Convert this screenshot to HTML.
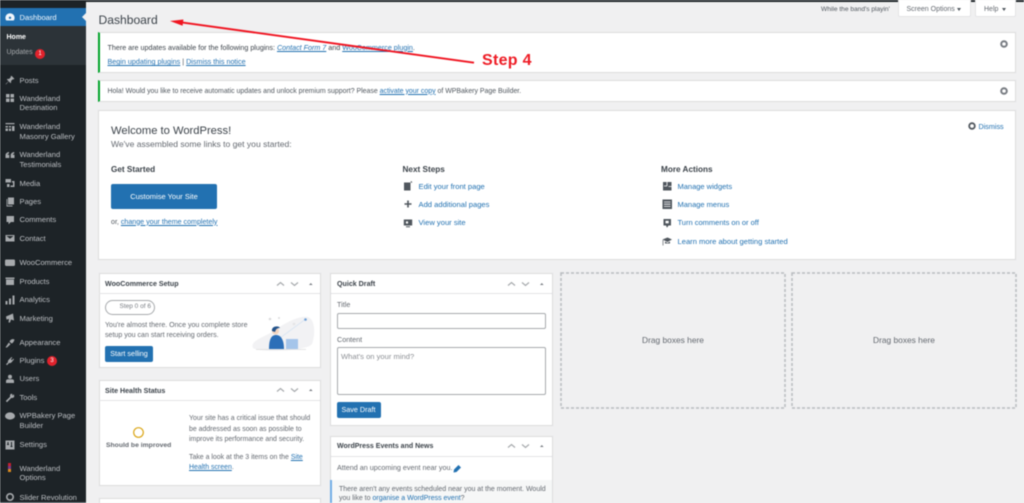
<!DOCTYPE html>
<html><head><meta charset="utf-8"><title>Dashboard</title>
<style>
html,body{margin:0;padding:0;width:1024px;height:503px;overflow:hidden;background:#f0f0f1}
body{position:relative;font-family:"Liberation Sans",sans-serif;font-size:7.6px;color:#50575e}
#w{position:absolute;left:0;top:0;width:1024px;height:503px;overflow:hidden;filter:blur(.42px)}
#w div,#w a,#w svg{position:absolute}
.t{white-space:nowrap;line-height:10px}
a.t{color:#2271b1;text-decoration:none}
.u{text-decoration:underline!important}
.m{left:19.5px;color:#bcbfc3;white-space:nowrap;line-height:9.5px;font-size:7.6px}
.i{left:5px;width:10px;height:10px}
.b{background:#fff;border:1px solid #dcdcde;box-sizing:border-box}
.h{font-weight:bold;font-size:7.1px;color:#3c434a;white-space:nowrap;line-height:10px}
.hl{height:1px;background:#e4e4e6}
.btn{background:#2271b1;border-radius:2px;color:#fff;text-align:center;white-space:nowrap}
.d{color:#646970;text-align:center;font-size:8.4px;line-height:137px}
.bd{width:12px;height:10px;border-radius:5px;background:#e0222c;color:#fff;font-size:6px;line-height:10px;text-align:center}
.ic{fill:#a7aaad}
.gr{fill:#50575e}
</style></head><body><div id="w">

<div style="left:0;top:0;width:1024px;height:2px;background:#1d2327"></div>
<div style="left:0;top:0;width:86px;height:503px;background:#1d2327"></div>
<div style="left:0;top:8px;width:86px;height:18px;background:#2271b1"></div>
<div style="left:0;top:26px;width:86px;height:39px;background:#2c3338"></div>
<div style="left:82px;top:13px;width:0;height:0;border:4px solid transparent;border-right-color:#f0f0f1;border-left:0"></div>
<div style="left:0;top:502px;width:86px;height:1px;background:#50575e"></div>

<svg style="left:5px;top:12px" width="10" height="10" viewBox="0 0 10 10"><path d="M5 1.2a4.600 4.600 0 0 0-4.600 4.600c0 1 .3 1.900.9 2.700h7.400c.6-.8.9-1.700.9-2.700A4.600 4.600 0 0 0 5 1.200z" fill="#f0f6fc"/><circle cx="5" cy="5.800" r="1.200" fill="#2271b1"/></svg>
<div class="m" style="top:12.500px;color:#f0f6fc">Dashboard</div>
<div class="m" style="left:6.500px;top:33px;color:#fff;font-weight:bold;font-size:7px">Home</div>
<div class="m" style="left:6.500px;top:48px;color:#a7aaad;font-size:7px">Updates</div>
<div class="bd" style="left:35px;top:48.500px;width:10px;height:10px">1</div>

<svg class="i" style="top:75px" viewBox="0 0 10 10"><path class="ic" d="M6.500.8 9.400 3.700 8.600 4.400 7.800 4.200 6 6c.3 1 .1 1.700-.4 2.200L3.800 6.400 1 9.400.6 9l3-2.800L1.800 4.400C2.300 3.900 3 3.700 4 4L5.800 2.200 5.600 1.400z"/></svg>
<div class="m" style="top:75.500px">Posts</div>
<svg class="i" style="top:93px" viewBox="0 0 10 10"><path class="ic" d="M1 1h3.500v3.500H1zM5.500 1H9v3.500H5.500zM1 5.500h3.500V9H1zM5.500 5.500H9V9H5.500z"/></svg>
<div class="m" style="top:93.500px">Wanderland<br>Destination</div>
<svg class="i" style="top:122px" viewBox="0 0 10 10"><path class="ic" d="M.5 1h9v1.200h-9zM.5 4h2.500v1.500H.5zM4 4h2v1.500H4zM7 4h2.500v5H7zM.5 6.500h2.500V9H.5zM4 6.500h2V9H4z"/></svg>
<div class="m" style="top:122px">Wanderland<br>Masonry Gallery</div>
<svg class="i" style="top:150px" viewBox="0 0 10 10"><path class="ic" d="M.5 8V5.500C.5 3.500 1.800 2.300 4 2v1.500c-1 .2-1.400.6-1.500 1.300H4.300V8zM5.700 8V5.500c0-2 1.300-3.200 3.500-3.500v1.500c-1 .2-1.400.6-1.500 1.300h1.800V8z"/></svg>
<div class="m" style="top:150px">Wanderland<br>Testimonials</div>
<svg class="i" style="top:178px" viewBox="0 0 10 10"><path class="ic" d="M.5 1h5.500v3.500H.5zM7 3h2.500v6H5.500V7.500H8V4.500H7zM2 6h2.500v3H2z"/></svg>
<div class="m" style="top:178.500px">Media</div>
<svg class="i" style="top:196.500px" viewBox="0 0 10 10"><path class="ic" d="M3 .5h6v7H3zM1.500 2H2.300v6.500H7.500v1h-6z"/></svg>
<div class="m" style="top:196.500px">Pages</div>
<svg class="i" style="top:215px" viewBox="0 0 10 10"><path class="ic" d="M1.500 1h7.500v6H6L3.500 9.200V7H1.500z"/></svg>
<div class="m" style="top:215px">Comments</div>
<svg class="i" style="top:233px" viewBox="0 0 10 10"><path class="ic" d="M.5 2h9v6.500h-9zM1.500 3 5 5.800 8.500 3z"/></svg>
<div class="m" style="top:233.500px">Contact</div>

<svg class="i" style="top:258px" viewBox="0 0 10 10"><rect class="ic" x="0" y="1.500" width="10" height="6.500" rx="1.200"/></svg>
<div class="m" style="top:258px">WooCommerce</div>
<svg class="i" style="top:276px" viewBox="0 0 10 10"><path class="ic" d="M.5 1.500h9v1.500h-9zM1 3.500h8V9H1z"/></svg>
<div class="m" style="top:276.500px">Products</div>
<svg class="i" style="top:294.500px" viewBox="0 0 10 10"><path class="ic" d="M.5 6h2v3.500h-2zM4 3.500h2v6H4zM7.500.5h2v9h-2z"/></svg>
<div class="m" style="top:294.500px">Analytics</div>
<svg class="i" style="top:313px" viewBox="0 0 10 10"><path class="ic" d="M1 3.500 8 .5l1 7-3-1-1 3H3.500L4 6 1.500 6.500z"/></svg>
<div class="m" style="top:313.500px">Marketing</div>
<svg class="i" style="top:337.500px" viewBox="0 0 10 10"><path class="ic" d="M9.500 1.500C7.500.5 5.500 1.500 4.500 3.500l2 2C8 5 9 3.500 9.500 1.500zM3.800 4.500 5.500 6.200 2 9.500.5 9.500z"/></svg>
<div class="m" style="top:337.500px">Appearance</div>
<svg class="i" style="top:356px" viewBox="0 0 10 10"><path class="ic" d="M6.500 1 7.300 1.600 5.800 3.200 6.800 4.200 8.400 2.600 9 3.400 6.800 6C6 7 5 7.300 4 7L2 9.300 1 8.300 3 6.300C2.700 5.300 3 4.300 4 3.500z"/></svg>
<div class="m" style="top:356px">Plugins</div>
<div class="bd" style="left:47px;top:356px;width:10px;height:10px">3</div>
<svg class="i" style="top:374px" viewBox="0 0 10 10"><circle class="ic" cx="5" cy="2.800" r="2"/><path class="ic" d="M1 9V6.800C1 6 2 5.300 3 5.300h4c1 0 2 .7 2 1.500V9z"/></svg>
<div class="m" style="top:374px">Users</div>
<svg class="i" style="top:392.500px" viewBox="0 0 10 10"><path class="ic" d="M8.800 1.200 7.200 2.800 7.400 1 6 .8C5 1.500 4.800 2.800 5.100 3.700L.8 8l1.200 1.200L6.300 4.900C7.500 5.200 8.800 4.800 9.300 3.500z"/></svg>
<div class="m" style="top:392.500px">Tools</div>
<svg class="i" style="top:411px" viewBox="0 0 10 10"><ellipse class="ic" cx="5" cy="5" rx="5" ry="3.600"/></svg>
<div class="m" style="top:411px">WPBakery Page<br>Builder</div>
<svg class="i" style="top:439.500px" viewBox="0 0 10 10"><path class="ic" d="M.5.5h9v9h-9zM2.500 2v2H2v1h2V4H3.500V2zM6 2v4H5.500v1h2V6H7V2z"/></svg>
<div class="m" style="top:439.500px">Settings</div>
<svg class="i" style="top:463px" viewBox="0 0 10 10"><rect x="3" y="0" width="3" height="3" fill="#c5202f"/><rect x="3" y="3" width="3" height="3" fill="#7a3a8a"/><rect x="3" y="6" width="3" height="3" fill="#d98a1f"/></svg>
<div class="m" style="top:463.500px">Wanderland<br>Options</div>
<svg class="i" style="top:492px" viewBox="0 0 10 10"><circle cx="5" cy="5" r="3.200" fill="none" stroke="#a7aaad" stroke-width="1.600"/></svg>
<div class="m" style="top:492.500px">Slider Revolution</div>

<div class="t" style="left:98.500px;top:14px;font-size:12.100px;line-height:13px;color:#3c434a">Dashboard</div>
<div class="t" style="left:821px;top:5px;font-size:6.600px;color:#50575e">While the band's playin'</div>
<div class="b" style="left:898px;top:0;width:73px;height:17px;border-top:0;border-color:#e4e4e6;border-radius:0 0 2px 2px"></div>
<div class="t" style="left:906.500px;top:5px;font-size:7px;color:#646970">Screen Options</div>
<div style="left:957px;top:8px;width:0;height:0;border:2.200px solid transparent;border-top:3px solid #50575e;border-bottom:0"></div>
<div class="b" style="left:975px;top:0;width:41px;height:17px;border-top:0;border-color:#e4e4e6;border-radius:0 0 2px 2px"></div>
<div class="t" style="left:984px;top:5px;font-size:7px;color:#646970">Help</div>
<div style="left:1002px;top:8px;width:0;height:0;border:2.200px solid transparent;border-top:3px solid #50575e;border-bottom:0"></div>

<div class="b" style="left:98px;top:32px;width:918px;height:40.500px;border-left:2px solid #00a32a"></div>
<div class="t" style="left:107.500px;top:42.500px;font-size:7.170px;color:#3c434a">There are updates available for the following plugins: <a class="t u" style="position:static;font-style:italic">Contact Form 7</a> and <a class="t u" style="position:static">WooCommerce plugin</a>.</div>
<div class="t" style="left:107.500px;top:57px;font-size:7.200px"><a class="t u" style="position:static">Begin updating plugins</a> | <a class="t u" style="position:static">Dismiss this notice</a></div>
<div class="b" style="left:98px;top:80px;width:918px;height:22px;border-left:2px solid #00a32a"></div>
<div class="t" style="left:107.500px;top:86.500px;font-size:6.950px">Hola! Would you like to receive automatic updates and unlock premium support? Please <a class="t u" style="position:static">activate your copy</a> of WPBakery Page Builder.</div>
<svg style="left:1000px;top:39.500px" width="8" height="8" viewBox="0 0 8 8"><circle cx="4" cy="4" r="2.800" fill="#fff" stroke="#787c82" stroke-width="2"/></svg>
<svg style="left:1000px;top:87px" width="8" height="8" viewBox="0 0 8 8"><circle cx="4" cy="4" r="2.800" fill="#fff" stroke="#787c82" stroke-width="2"/></svg>

<div class="b" style="left:98px;top:110px;width:918px;height:149.500px"></div>
<div class="t" style="left:111px;top:125px;font-size:11.200px;line-height:12px;color:#3c434a">Welcome to WordPress!</div>
<div class="t" style="left:111px;top:139px;font-size:8.550px;color:#646970">We've assembled some links to get you started:</div>
<svg style="left:967.500px;top:122px" width="8" height="8" viewBox="0 0 8 8"><circle cx="4" cy="4" r="2.800" fill="#fff" stroke="#50575e" stroke-width="1.800"/></svg>
<a class="t" style="left:978.500px;top:121.500px;font-size:7.200px">Dismiss</a>
<div class="h" style="left:111px;top:164.500px;font-size:8.200px">Get Started</div>
<div class="h" style="left:402.500px;top:164.500px;font-size:8.200px">Next Steps</div>
<div class="h" style="left:661px;top:164.500px;font-size:8.200px">More Actions</div>
<div class="btn" style="left:111px;top:184px;width:106px;height:25px;font-size:7.500px;line-height:25px">Customise Your Site</div>
<div class="t" style="left:111px;top:216.500px;font-size:7.100px">or, <a class="t u" style="position:static">change your theme completely</a></div>

<svg style="left:403px;top:181px" width="10" height="10" viewBox="0 0 10 10"><path class="gr" d="M1 1.500h6.500v8H1z"/><path class="gr" d="M8 0 9.300 1 8.500 2 7.600 1z"/></svg>
<a class="t" style="left:418.500px;top:181.500px;font-size:7.600px">Edit your front page</a>
<svg style="left:403px;top:199px" width="10" height="10" viewBox="0 0 10 10"><path class="gr" d="M4.200 1.500h1.600v2.700h2.700v1.600H5.800v2.700H4.200V5.800H1.500V4.200h2.700z"/></svg>
<a class="t" style="left:418.500px;top:199.500px;font-size:7.600px">Add additional pages</a>
<svg style="left:403px;top:217.500px" width="10" height="10" viewBox="0 0 10 10"><path class="gr" d="M.8 1.500h8.400v6H.8zM3 8.200h4v1H3z"/><circle cx="4" cy="4.500" r="1.200" fill="#fff"/></svg>
<a class="t" style="left:418.500px;top:218px;font-size:7.600px">View your site</a>

<svg style="left:661.500px;top:181px" width="10" height="10" viewBox="0 0 10 10"><path class="gr" d="M1 1h8.500v8.500H1z"/><path d="M5 1v4M2 5h3M6.500 5.500h3" stroke="#fff" stroke-width=".8"/></svg>
<a class="t" style="left:677.500px;top:181.500px;font-size:7.500px">Manage widgets</a>
<svg style="left:661.500px;top:199px" width="10" height="10" viewBox="0 0 10 10"><path class="gr" d="M.5.5h9.500v9.500H.5z"/><path d="M2 3h6.500M2 5.200h6.500M2 7.400h6.500" stroke="#fff" stroke-width=".8"/></svg>
<a class="t" style="left:677.500px;top:199.500px;font-size:7.500px">Manage menus</a>
<svg style="left:661.500px;top:217.500px" width="10" height="10" viewBox="0 0 10 10"><path class="gr" d="M1.500 1h7.500v6.500H6.500L5 9.800 4 7.500H1.500z"/><rect x="3.500" y="2.800" width="3.200" height="2.500" fill="#fff"/></svg>
<a class="t" style="left:677.500px;top:218px;font-size:7.500px">Turn comments on or off</a>
<svg style="left:661.500px;top:236px" width="10" height="10" viewBox="0 0 10 10"><path class="gr" d="M.5 3.500 5.500 1.500 10 3.500 5.500 6z"/><path class="gr" d="M3 5.500 5.500 7 8 5.500V7.500H3z"/><path d="M1 3.800V9.500" stroke="#8c8f94" stroke-width="1"/></svg>
<a class="t" style="left:677.500px;top:236.500px;font-size:7.600px">Learn more about getting started</a>

<!-- WooCommerce setup -->
<div class="b" style="left:98.500px;top:273px;width:222px;height:95px"></div>
<div class="hl" style="left:99px;top:293px;width:221px"></div>
<div class="h" style="left:105px;top:279px">WooCommerce Setup</div>
<svg style="left:276px;top:279.500px" width="40" height="8" viewBox="0 0 40 8"><path d="M1 5.500 4.500 2.500 8 5.500M15 2.500 18.500 5.500 22 2.500" fill="none" stroke="#a7aaad" stroke-width="1.200"/><path d="M33 5h3.600L34.800 3z" fill="#787c82"/></svg>
<div style="left:105px;top:299.500px;width:50px;height:15px;border:1px solid #a7aaad;border-radius:8px;box-sizing:border-box"></div>
<div class="t" style="left:119.500px;top:302px;font-size:6.500px;color:#787c82">Step 0 of 6</div>
<div class="t" style="left:105px;top:320.500px;font-size:7.050px;color:#646970">You're almost there. Once you complete store</div>
<div class="t" style="left:105px;top:330.500px;font-size:7.050px;color:#646970">setup you can start receiving orders.</div>
<div class="btn" style="left:105px;top:346px;width:48px;height:16px;font-size:7.200px;line-height:16px">Start selling</div>
<svg style="left:250px;top:314px" width="68" height="40" viewBox="0 0 68 40"><path d="M3 34C0 27 12 24 22 18 32 11 48 1 58 3 66 6 65 22 62 30 58 37 10 39 3 34z" fill="#f2f2f4"/><path d="M26 27 55 5.500" stroke="#dbe6f3" stroke-width="1"/><circle cx="55.500" cy="5.500" r="1.300" fill="#6d9fd6"/><circle cx="20" cy="5" r="1.300" fill="#dcdcde"/><circle cx="29" cy="4" r="1" fill="#dcdcde"/><circle cx="44" cy="10" r="1.300" fill="#e4e4e6"/><rect x="36" y="25" width="12" height="10" fill="#a5c5ea"/><path d="M19 35c0-9 2-14 7-14s8 5 8 14z" fill="#2c6fb8"/><circle cx="25.500" cy="17" r="3.500" fill="#f3d5c0"/><path d="M22 17c-1-5 7-6 8-3-3 0-4 1-5 4z" fill="#24538a"/><path d="M6 35.500H56" stroke="#dcdcde" stroke-width=".8"/></svg>

<!-- Site health -->
<div class="b" style="left:98.500px;top:380px;width:222px;height:106px"></div>
<div class="hl" style="left:99px;top:400px;width:221px"></div>
<div class="h" style="left:105px;top:385.500px">Site Health Status</div>
<svg style="left:276px;top:385.500px" width="40" height="8" viewBox="0 0 40 8"><path d="M1 5.500 4.500 2.500 8 5.500M15 2.500 18.500 5.500 22 2.500" fill="none" stroke="#a7aaad" stroke-width="1.200"/><path d="M33 5h3.600L34.800 3z" fill="#787c82"/></svg>
<svg style="left:132px;top:426px" width="13" height="13" viewBox="0 0 13 13"><circle cx="6.500" cy="6.500" r="4.800" fill="none" stroke="#dba617" stroke-width="1.200"/></svg>
<div class="t" style="left:106px;top:440.500px;font-size:6.800px;font-weight:bold;color:#646970">Should be improved</div>
<div class="t" style="left:189px;top:414px;font-size:6.950px;color:#646970">Your site has a critical issue that should</div>
<div class="t" style="left:189px;top:424.500px;font-size:6.950px;color:#646970">be addressed as soon as possible to</div>
<div class="t" style="left:189px;top:435px;font-size:6.950px;color:#646970">improve its performance and security.</div>
<div class="t" style="left:189px;top:452.500px;font-size:6.950px;color:#646970">Take a look at the 3 items on the <a class="t u" style="position:static">Site</a></div>
<div class="t" style="left:189px;top:462.500px;font-size:6.950px;color:#646970"><a class="t u" style="position:static">Health screen</a>.</div>
<div class="b" style="left:98.500px;top:498px;width:222px;height:10px"></div>

<!-- Quick Draft -->
<div class="b" style="left:330px;top:273px;width:222.500px;height:152.500px"></div>
<div class="hl" style="left:331px;top:293px;width:221px"></div>
<div class="h" style="left:337px;top:279px">Quick Draft</div>
<svg style="left:507px;top:279.500px" width="40" height="8" viewBox="0 0 40 8"><path d="M1 5.500 4.500 2.500 8 5.500M15 2.500 18.500 5.500 22 2.500" fill="none" stroke="#a7aaad" stroke-width="1.200"/><path d="M33 5h3.600L34.800 3z" fill="#787c82"/></svg>
<div class="t" style="left:337px;top:300px;font-size:7.200px;color:#646970">Title</div>
<div style="left:336.500px;top:312.500px;width:209.500px;height:16.500px;border:1px solid #a7aaad;border-radius:2px;box-sizing:border-box;background:#fff"></div>
<div class="t" style="left:337px;top:335px;font-size:7.200px;color:#646970">Content</div>
<div style="left:336.500px;top:347px;width:209.500px;height:48px;border:1px solid #a7aaad;border-radius:2px;box-sizing:border-box;background:#fff"></div>
<div class="t" style="left:341px;top:351.500px;font-size:7.600px;color:#8c8f94">What's on your mind?</div>
<div class="btn" style="left:336.500px;top:402px;width:44px;height:16px;font-size:7.200px;line-height:16px">Save Draft</div>

<!-- Events -->
<div class="b" style="left:330px;top:436px;width:222.500px;height:75px"></div>
<div class="hl" style="left:331px;top:456px;width:221px"></div>
<div class="h" style="left:337px;top:441.500px;font-size:7px">WordPress Events and News</div>
<svg style="left:507px;top:442px" width="40" height="8" viewBox="0 0 40 8"><path d="M1 5.500 4.500 2.500 8 5.500M15 2.500 18.500 5.500 22 2.500" fill="none" stroke="#a7aaad" stroke-width="1.200"/><path d="M33 5h3.600L34.800 3z" fill="#787c82"/></svg>
<div class="t" style="left:337px;top:463px;font-size:7.200px;color:#646970">Attend an upcoming event near you.</div>
<svg style="left:453px;top:464px" width="9" height="9" viewBox="0 0 9 9"><path d="M.5 8.500 1 5.500 5.500 1 8 3.500 3.500 8z" fill="#2271b1"/></svg>
<div style="left:331px;top:480px;width:221px;height:30px;background:#f6f7f7"></div>
<div style="left:330px;top:480px;width:2px;height:30px;background:#72aee6"></div>
<div class="t" style="left:339px;top:485px;font-size:7px;color:#646970">There aren't any events scheduled near you at the moment. Would</div>
<div class="t" style="left:339px;top:494px;font-size:7px;color:#646970">you like to <a class="t" style="position:static">organise a WordPress event</a>?</div>

<!-- Drag boxes -->
<svg style="left:560px;top:272px" width="226" height="137" viewBox="0 0 226 137"><rect x="1" y="1" width="224" height="135" fill="none" stroke="#b8bbbf" stroke-width="1.500" stroke-dasharray="3 2"/></svg>
<svg style="left:791px;top:272px" width="226" height="137" viewBox="0 0 226 137"><rect x="1" y="1" width="224" height="135" fill="none" stroke="#b8bbbf" stroke-width="1.500" stroke-dasharray="3 2"/></svg>
<div class="d" style="left:560px;top:272px;width:226px;height:137px">Drag boxes here</div>
<div class="d" style="left:791px;top:272px;width:226px;height:137px">Drag boxes here</div>

<!-- annotation -->
<svg style="left:165px;top:15px" width="315" height="55" viewBox="0 0 315 55"><path d="M15 7.200 309 47.700" stroke="#f01420" stroke-width="1.900" fill="none"/><path d="M5 6 18.400 4.500 17.600 10.800z" fill="#f01420"/></svg>
<div class="t" style="left:482px;top:51.500px;font-size:16px;line-height:18px;color:#ee1c25;font-weight:bold;letter-spacing:.3px">Step 4</div>
</div></body></html>
